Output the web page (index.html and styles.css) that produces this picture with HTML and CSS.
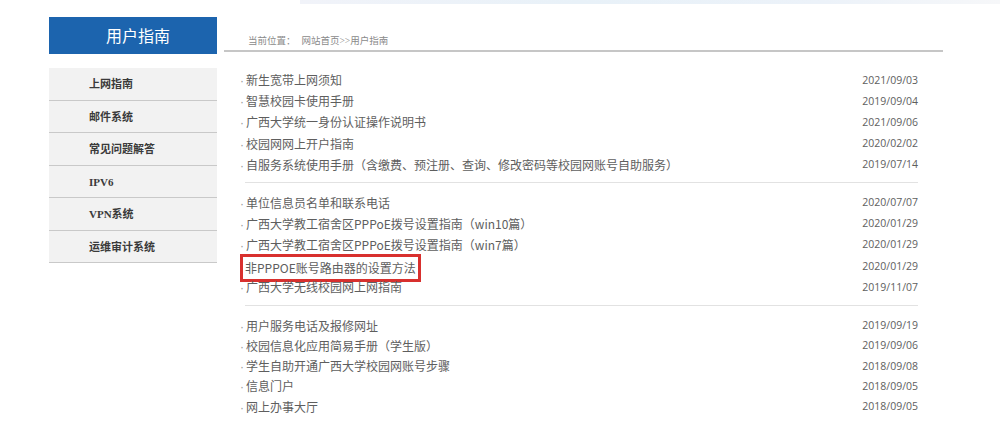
FILE: index.html
```html
<!DOCTYPE html>
<html lang="zh-CN">
<head>
<meta charset="utf-8">
<title>用户指南</title>
<link rel="stylesheet" href="styles.css">
</head>
<body>
<div class="topbar"></div>
<div class="wrap">
  <aside class="sidebar">
    <div class="side-head">用户指南</div>
    <ul class="side-list">
      <li class="side-item">上网指南</li>
      <li class="side-item">邮件系统</li>
      <li class="side-item">常见问题解答</li>
      <li class="side-item">IPV6</li>
      <li class="side-item">VPN系统</li>
      <li class="side-item">运维审计系统</li>
    </ul>
  </aside>
  <main class="main">
    <div class="crumb"><span class="crumb-label">当前位置：</span><span>网站首页&gt;&gt;用户指南</span></div>
    <div class="lists">
      <ul class="group">
        <li class="row"><span class="title">新生宽带上网须知</span><span class="date">2021/09/03</span></li>
        <li class="row"><span class="title">智慧校园卡使用手册</span><span class="date">2019/09/04</span></li>
        <li class="row"><span class="title">广西大学统一身份认证操作说明书</span><span class="date">2021/09/06</span></li>
        <li class="row"><span class="title">校园网网上开户指南</span><span class="date">2020/02/02</span></li>
        <li class="row"><span class="title">自服务系统使用手册（含缴费、预注册、查询、修改密码等校园网账号自助服务）</span><span class="date">2019/07/14</span></li>
      </ul>
      <ul class="group">
        <li class="row"><span class="title">单位信息员名单和联系电话</span><span class="date">2020/07/07</span></li>
        <li class="row"><span class="title">广西大学教工宿舍区PPPoE拨号设置指南（win10篇）</span><span class="date">2020/01/29</span></li>
        <li class="row"><span class="title">广西大学教工宿舍区PPPoE拨号设置指南（win7篇）</span><span class="date">2020/01/29</span></li>
        <li class="row"><span class="title marked">非PPPOE账号路由器的设置方法</span><span class="date">2020/01/29</span></li>
        <li class="row"><span class="title">广西大学无线校园网上网指南</span><span class="date">2019/11/07</span></li>
      </ul>
      <ul class="group last">
        <li class="row"><span class="title">用户服务电话及报修网址</span><span class="date">2019/09/19</span></li>
        <li class="row"><span class="title">校园信息化应用简易手册（学生版）</span><span class="date">2019/09/06</span></li>
        <li class="row"><span class="title">学生自助开通广西大学校园网账号步骤</span><span class="date">2018/09/08</span></li>
        <li class="row"><span class="title">信息门户</span><span class="date">2018/09/05</span></li>
        <li class="row"><span class="title">网上办事大厅</span><span class="date">2018/09/05</span></li>
      </ul>
      <div class="pager">
        <span class="pg-dot"></span>
        <span class="pg"></span>
        <span class="pg"></span>
        <span class="pg"></span>
        <span class="pg"></span>
        <span class="pg pg-s"></span>
        <span class="pg pg-w"></span>
      </div>
    </div>
  </main>
</div>
</body>
</html>
```
FILE: styles.css
```css
html, body {
  margin: 0;
  padding: 0;
  background: #fff;
  overflow: hidden;
}
body {
  font-family: "Noto Sans CJK SC", "Noto Sans", sans-serif;
  color: #5a5a5a;
}
ul {
  list-style: none;
  margin: 0;
  padding: 0;
}
.topbar {
  height: 4px;
  margin-left: 300px;
  background: linear-gradient(90deg, #f1f3f9 0%, #e8f1f8 40%, #ecf2f9 75%, #f6f7f9 100%);
}
.wrap {
  display: flex;
  padding-top: 13px;
  padding-left: 49px;
}
.sidebar {
  width: 168px;
  flex: none;
}
.side-head {
  height: 37px;
  line-height: 37px;
  background: #1c64ae;
  color: #fff;
  font-size: 16px;
  text-align: center;
  padding-left: 10px;
  box-sizing: border-box;
}
.side-list {
  margin-top: 14px;
}
.side-item {
  height: 31.5px;
  line-height: 32px;
  border-bottom: 1px solid #c9c9c9;
  background: #f2f2f2;
  padding-left: 40px;
  font-family: "Liberation Serif", "Noto Sans CJK SC", serif;
  font-weight: bold;
  font-size: 11px;
  color: #3a3a3a;
}
.main {
  width: 719px;
  margin-left: 7px;
  flex: none;
}
.crumb {
  height: 35px;
  box-sizing: border-box;
  border-bottom: 2px solid #c6c6c6;
  padding-left: 24px;
  padding-top: 17px;
  font-family: "Liberation Serif", "Noto Sans CJK SC", serif;
  font-size: 9.5px;
  color: #8a8a8a;
  line-height: 14px;
}
.crumb-label {
  margin-right: 6px;
}
.lists {
  margin: 9px 25px 0 21px;
}
.group {
  padding: 8px 0 7.5px;
  border-bottom: 1px solid #e2e2e2;
}
.group.last {
  padding-top: 9px;
  border-bottom: none;
}
.row {
  display: flex;
  justify-content: space-between;
  align-items: center;
  height: 21.2px;
  font-size: 12px;
}
.group.last .row {
  height: 20.3px;
}
.title {
  color: #5e5e5e;
}
.title::before {
  content: "·";
  font-family: "Liberation Sans", sans-serif;
  color: #999;
  margin-right: 2px;
  margin-left: -5px;
}
.title.marked {
  display: inline-block;
  line-height: 17px;
  padding: 2px 2px 1px 2px;
  margin-left: -2px;
  margin-top: 4px;
  outline: 3px solid #d8302e;
}
.title.marked::before {
  content: "";
  margin: 0;
}
.date {
  font-family: "Open Sans", "Liberation Sans", sans-serif;
  font-size: 10.5px;
  color: #5e5e5e;
}
.pager {
  display: flex;
  align-items: flex-start;
  padding-top: 1px;
  gap: 3px;
}
.pg-dot {
  width: 3px;
  height: 3px;
  background: #bbb;
  margin: 2px 47px 0 23px;
}
.pg {
  width: 26px;
  height: 20px;
  border: 1px solid #cfcfcf;
  box-sizing: border-box;
}
.pg-s {
  width: 19px;
  margin-left: 20px;
}
.pg-w {
  width: 40px;
  border-color: #aaa;
}
```
